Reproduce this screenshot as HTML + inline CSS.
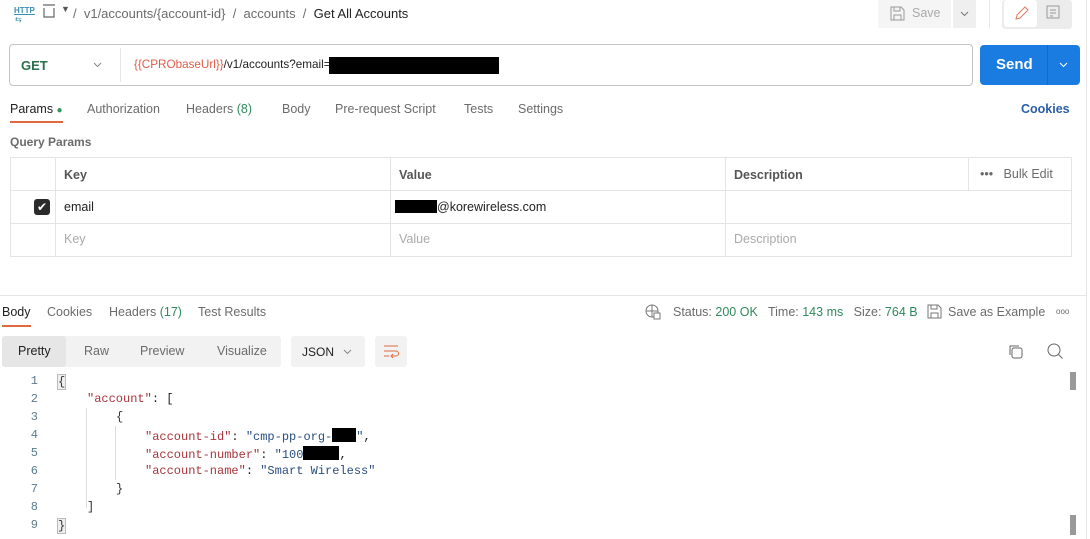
<!DOCTYPE html>
<html><head><meta charset="utf-8"><style>
*{box-sizing:border-box;margin:0;padding:0}
body{width:1090px;height:539px;overflow:hidden;background:#fff;font-family:"Liberation Sans",Arial,sans-serif;font-size:12.5px;color:#212121;position:relative}
.a{position:absolute;white-space:nowrap}
.g{color:#6b6b6b}
.mono{font-family:"Liberation Mono",monospace;font-size:12px}
.k{color:#a8343a}.s{color:#2a4f80}.p{color:#333}
.ln{color:#5b7d8c;width:20px;text-align:right;left:18px}
</style></head><body>
<!-- header -->
<div class="a" style="left:14px;top:6px;font-size:8px;color:#3a8fb0;text-decoration:underline;font-weight:bold">HTTP</div>
<div class="a" style="left:15px;top:15px;font-size:8px;color:#3a8fb0">⇆</div>
<svg class="a" style="left:42px;top:3px" width="14" height="16"><path d="M1 2h12M2 5v9h10V5" stroke="#666" fill="none" stroke-width="1.2"/></svg>
<div class="a" style="left:61px;top:4px;font-size:9px;color:#555">▼</div>
<div class="a g" style="left:73px;top:6px;font-size:13px">/ &nbsp;v1/accounts/{account-id} &nbsp;/ &nbsp;accounts &nbsp;/ &nbsp;<span style="color:#212121">Get All Accounts</span></div>
<div class="a" style="left:878px;top:0;width:73px;height:28px;background:#f5f5f5"></div>
<svg class="a" style="left:890px;top:6px" width="15" height="15"><path d="M1 1h10l3 3v10H1z M4 1v4h6V1 M4 14V9h7v5" stroke="#999" fill="none"/></svg>
<div class="a" style="left:912px;top:6px;color:#aaa;font-size:12.5px">Save</div>
<div class="a" style="left:953px;top:0;width:23px;height:28px;background:#efefef"></div>
<svg class="a" style="left:960px;top:11px" width="9" height="6"><path d="M1 1l3.5 3.5L8 1" stroke="#777" fill="none"/></svg>
<div class="a" style="left:989px;top:0;width:1px;height:28px;background:#e8e8e8"></div>
<div class="a" style="left:1002px;top:0;width:70px;height:29px;background:#ececec;border-radius:3px"></div>
<div class="a" style="left:1004px;top:0;width:33px;height:27px;background:#fff;border-radius:3px"></div>
<svg class="a" style="left:1013px;top:5px" width="16" height="16"><path d="M3 14l1-4 8-8 3 3-8 8z" stroke="#e07b5f" fill="none"/></svg>
<svg class="a" style="left:1046px;top:5px" width="14" height="16"><path d="M1 1h12v12H1z M4 5h6M4 8h6M4 11h3" stroke="#999" fill="none"/></svg>
<div class="a" style="left:1086px;top:0;width:1px;height:539px;background:#e6e6e6"></div>
<!-- url bar -->
<div class="a" style="left:9px;top:44px;width:964px;height:42px;border:1px solid #c4c4c4;border-radius:4px"></div>
<div class="a" style="left:21px;top:58px;font-weight:bold;color:#2b6e4b;font-size:13px">GET</div>
<svg class="a" style="left:93px;top:62px" width="9" height="6"><path d="M1 1l3.5 3.5L8 1" stroke="#888" fill="none"/></svg>
<div class="a" style="left:120px;top:48px;width:1px;height:34px;background:#e6e6e6"></div>
<div class="a" style="left:134px;top:58px;font-size:11.7px"><span style="color:#e05c4a">{{CPRObaseUrl}}</span>/v1/accounts?email=</div>
<div class="a" style="left:329px;top:57px;width:170px;height:17px;background:#000"></div>
<div class="a" style="left:980px;top:45px;width:100px;height:40px;background:#1a7be0;border-radius:4px"></div>
<div class="a" style="left:1047px;top:45px;width:1px;height:40px;background:#176bc4"></div>
<div class="a" style="left:996px;top:56px;color:#fff;font-weight:bold;font-size:15px">Send</div>
<svg class="a" style="left:1059px;top:62px" width="9" height="6"><path d="M1 1l3.5 3.5L8 1" stroke="#fff" fill="none"/></svg>
<!-- tabs -->
<div class="a" style="left:10px;top:102px;font-size:12.5px">Params <span style="color:#2f9a5b;font-size:10px">●</span></div>
<div class="a" style="left:10px;top:121px;width:53px;height:2px;background:#e06a3d"></div>
<div class="a g" style="left:87px;top:102px">Authorization</div>
<div class="a g" style="left:186px;top:102px">Headers <span style="color:#2f8a5b">(8)</span></div>
<div class="a g" style="left:282px;top:102px">Body</div>
<div class="a g" style="left:335px;top:102px">Pre-request Script</div>
<div class="a g" style="left:464px;top:102px">Tests</div>
<div class="a g" style="left:518px;top:102px">Settings</div>
<div class="a" style="left:1021px;top:102px;color:#2a5ea8;font-weight:bold">Cookies</div>
<div class="a g" style="left:10px;top:135px;font-weight:bold;font-size:12px">Query Params</div>
<!-- table -->
<div class="a" style="left:10px;top:157px;width:1062px;height:100px;border:1px solid #e4e4e4"></div>
<div class="a" style="left:10px;top:190px;width:1062px;height:1px;background:#e4e4e4"></div>
<div class="a" style="left:10px;top:223px;width:1062px;height:1px;background:#e4e4e4"></div>
<div class="a" style="left:55px;top:157px;width:1px;height:100px;background:#e4e4e4"></div>
<div class="a" style="left:390px;top:157px;width:1px;height:100px;background:#e4e4e4"></div>
<div class="a" style="left:725px;top:157px;width:1px;height:100px;background:#e4e4e4"></div>
<div class="a" style="left:968px;top:157px;width:1px;height:33px;background:#e4e4e4"></div>
<div class="a g" style="left:64px;top:168px;font-weight:bold;color:#555">Key</div>
<div class="a g" style="left:399px;top:168px;font-weight:bold;color:#555">Value</div>
<div class="a g" style="left:734px;top:168px;font-weight:bold;color:#555">Description</div>
<div class="a g" style="left:980px;top:167px">•••&nbsp;&nbsp; Bulk Edit</div>
<div class="a" style="left:34px;top:199px;width:16px;height:16px;background:#2b2b2b;border-radius:3px;color:#fff;font-size:12px;text-align:center;line-height:16px">✔</div>
<div class="a" style="left:64px;top:200px">email</div>
<div class="a" style="left:395px;top:200px;width:42px;height:13px;background:#000"></div>
<div class="a" style="left:437px;top:200px">@korewireless.com</div>
<div class="a" style="left:64px;top:232px;color:#aaa">Key</div>
<div class="a" style="left:399px;top:232px;color:#aaa">Value</div>
<div class="a" style="left:734px;top:232px;color:#aaa">Description</div>
<!-- response -->
<div class="a" style="left:0;top:295px;width:1086px;height:1px;background:#e6e6e6"></div>
<div class="a" style="left:2px;top:305px">Body</div>
<div class="a" style="left:2px;top:325px;width:29px;height:2px;background:#e06a3d"></div>
<div class="a g" style="left:47px;top:305px">Cookies</div>
<div class="a g" style="left:109px;top:305px">Headers <span style="color:#2f8a5b">(17)</span></div>
<div class="a g" style="left:198px;top:305px">Test Results</div>
<svg class="a" style="left:645px;top:304px" width="16" height="16"><circle cx="7" cy="7" r="6" stroke="#777" fill="none"/><path d="M1 7h12M7 1v12" stroke="#777"/><rect x="9" y="9" width="6" height="6" fill="#fff" stroke="#777"/></svg>
<div class="a g" style="left:673px;top:305px">Status: <span style="color:#2f8a5b">200 OK</span>&nbsp;&nbsp; Time: <span style="color:#2f8a5b">143 ms</span>&nbsp;&nbsp; Size: <span style="color:#2f8a5b">764 B</span></div>
<svg class="a" style="left:927px;top:304px" width="15" height="15"><path d="M1 1h10l3 3v10H1z M4 1v4h6V1 M4 14V9h7v5" stroke="#777" fill="none"/></svg>
<div class="a g" style="left:948px;top:305px">Save as Example</div>
<div class="a g" style="left:1056px;top:307px;font-size:8px">ooo</div>
<div class="a" style="left:2px;top:336px;width:279px;height:31px;background:#f2f2f2;border-radius:3px"></div>
<div class="a" style="left:2px;top:336px;width:64px;height:31px;background:#e6e6e6;border-radius:3px"></div>
<div class="a" style="left:18px;top:344px">Pretty</div>
<div class="a g" style="left:84px;top:344px">Raw</div>
<div class="a g" style="left:140px;top:344px">Preview</div>
<div class="a g" style="left:217px;top:344px">Visualize</div>
<div class="a" style="left:291px;top:336px;width:74px;height:31px;background:#f2f2f2;border-radius:3px"></div>
<div class="a" style="left:302px;top:345px;font-size:12px">JSON</div>
<svg class="a" style="left:343px;top:349px" width="9" height="6"><path d="M1 1l3.5 3.5L8 1" stroke="#888" fill="none"/></svg>
<div class="a" style="left:375px;top:336px;width:32px;height:31px;background:#f2f2f2;border-radius:3px"></div>
<svg class="a" style="left:383px;top:344px" width="16" height="14"><path d="M1 2h14M1 7h12a2.5 2.5 0 0 1 0 5H9M1 12h5M10 10l-2 2 2 2" stroke="#e06a3d" fill="none"/></svg>
<svg class="a" style="left:1008px;top:344px" width="16" height="16"><rect x="4" y="4" width="10" height="10" rx="2" stroke="#666" fill="none"/><path d="M2 11V2h9" stroke="#666" fill="none"/></svg>
<svg class="a" style="left:1047px;top:343px" width="17" height="17"><circle cx="7" cy="7" r="6" stroke="#666" fill="none"/><path d="M11.5 11.5l4 4" stroke="#666"/></svg>
<div class="a" style="left:1070px;top:372px;width:6px;height:18px;background:#999"></div>
<div class="a" style="left:1070px;top:515px;width:6px;height:20px;background:#999"></div>
<!-- code -->
<div class="a" style="left:86px;top:408px;width:1px;height:100px;background:#ddd"></div>
<div class="a" style="left:115px;top:426px;width:1px;height:54px;background:#ddd"></div>
<div class="a mono ln" style="top:374px">1</div>
<div class="a mono ln" style="top:392px">2</div>
<div class="a mono ln" style="top:410px">3</div>
<div class="a mono ln" style="top:428px">4</div>
<div class="a mono ln" style="top:446px">5</div>
<div class="a mono ln" style="top:464px">6</div>
<div class="a mono ln" style="top:482px">7</div>
<div class="a mono ln" style="top:500px">8</div>
<div class="a mono ln" style="top:518px">9</div>
<div class="a mono p" style="left:57px;top:374px;border:1px solid #bbb;background:#eee;line-height:14px">{</div>
<div class="a mono" style="left:87px;top:392px"><span class="k">"account"</span>: [</div>
<div class="a mono p" style="left:116px;top:410px">{</div>
<div class="a mono" style="left:145px;top:428px"><span class="k">"account-id"</span>: <span class="s">"cmp-pp-org-</span><span style="display:inline-block;width:24px;height:14px;background:#000;vertical-align:-2px"></span><span class="s">"</span>,</div>
<div class="a mono" style="left:145px;top:446px"><span class="k">"account-number"</span>: <span class="s">"100</span><span style="display:inline-block;width:36px;height:14px;background:#000;vertical-align:-2px"></span>,</div>
<div class="a mono" style="left:145px;top:464px"><span class="k">"account-name"</span>: <span class="s">"Smart Wireless"</span></div>
<div class="a mono p" style="left:116px;top:482px">}</div>
<div class="a mono p" style="left:87px;top:500px">]</div>
<div class="a mono p" style="left:57px;top:518px;border:1px solid #bbb;background:#eee;line-height:14px">}</div>
</body></html>
